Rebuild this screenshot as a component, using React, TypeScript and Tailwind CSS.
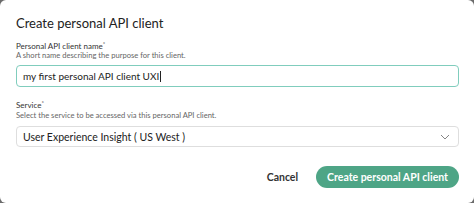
import React from 'react'

const ChevronDown: React.FC = () => (
  <svg width="10" height="6" viewBox="0 0 10 6" fill="none">
    <path d="M1 1 5 5 9 1" stroke="#777" strokeWidth="0.9" />
  </svg>
)

const App: React.FC = () => {
  return (
    <div className="h-[203px] w-[474px] bg-[#6b6b6b]" style={{ fontFamily: 'Lato, "Noto Sans", sans-serif' }}>
      <div className="flex h-full w-full flex-col rounded-[6px] bg-white pl-4 pr-[15px] pt-[15px]">
        <h1 className="text-[13px] leading-[16px] text-[#222]">Create personal API client</h1>

        <div className="mt-[11px] flex flex-col">
          <label className="text-[8px] leading-[9px] text-[#333]">
            Personal API client name<sup className="text-[6px]">*</sup>
          </label>
          <span className="text-[7.6px] leading-[9px] text-[#666]">
            A short name describing the purpose for this client.
          </span>
          <div className="mt-[5px] flex h-[22px] w-full items-center rounded-[4px] border border-[#80cdbd] px-[6px] text-[10px] leading-[12px] text-[#222]">
            my first personal API client UXI
            <span className="ml-px h-[11px] w-px bg-[#222]" />
          </div>
        </div>

        <div className="mt-[14px] flex flex-col">
          <label className="text-[8px] leading-[9px] text-[#333]">
            Service<sup className="text-[6px]">*</sup>
          </label>
          <span className="mt-px text-[7.6px] leading-[9px] text-[#666]">
            Select the service to be accessed via this personal API client.
          </span>
          <div className="mt-[6px] flex h-[21px] w-full items-center justify-between rounded-[4px] border border-[#dedede] pl-[6px] pr-[8px] text-[10.5px] leading-[12px] text-[#222]">
            <span>User Experience Insight ( US West )</span>
            <ChevronDown />
          </div>
        </div>

        <div className="mt-[19px] flex items-center justify-end gap-[18px]">
          <button className="text-[10.5px] font-bold leading-[12px] text-[#333]">Cancel</button>
          <button className="h-[22px] rounded-full bg-[#4ea586] px-[11px] text-[10.5px] font-bold leading-[12px] text-white">
            Create personal API client
          </button>
        </div>
      </div>
    </div>
  )
}

export default App
